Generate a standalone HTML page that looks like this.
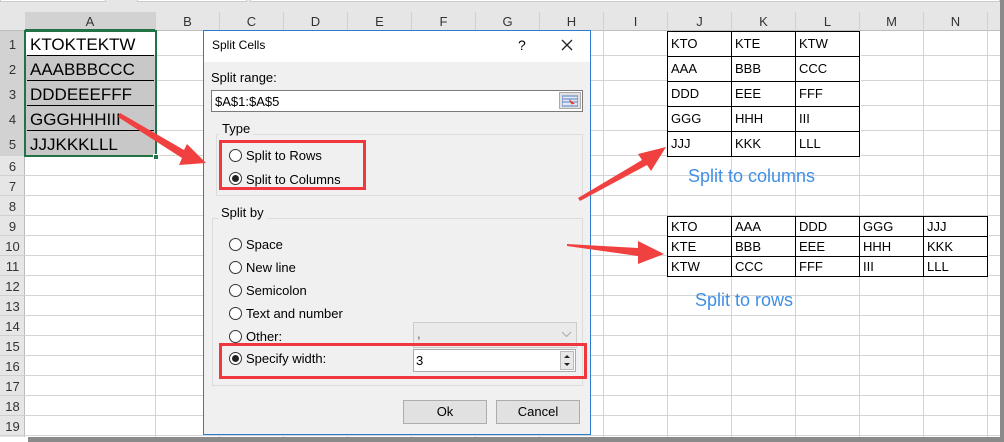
<!DOCTYPE html>
<html><head><meta charset="utf-8"><style>
body{margin:0;width:1004px;height:442px;overflow:hidden;background:#fff;position:relative;font-family:"Liberation Sans",sans-serif}
div{position:absolute;box-sizing:border-box}
.vl{width:1px;background:#d4d4d4}
.hl{height:1px;background:#d4d4d4}
.ch{top:12px;height:19px;font-size:13px;color:#333;text-align:center;line-height:20px;border-right:1px solid #d0d0d0}
.rh{left:0;width:25px;font-size:13px;color:#333;text-align:center;border-bottom:1px solid #d0d0d0}
.ca{left:27px;width:128px;height:25px;font-size:17px;line-height:27px;padding-left:3px;color:#000}
.t{font-size:13px;color:#000;padding-left:3px;border:1px solid #000;margin:-1px 0 0 -1px;line-height:24px}
.dl{font-size:13px;color:#000;white-space:nowrap}
.rd{width:13px;height:13px;border:1px solid #333;border-radius:50%;background:#fff}
.rd.on::after{content:"";position:absolute;left:2px;top:2px;width:7px;height:7px;border-radius:50%;background:#222}
.btn{height:24px;width:84px;border:1px solid #adadad;background:#e1e1e1;font-size:13px;text-align:center;line-height:22px}
</style></head><body>
<div style="left:0;top:0;width:1004px;height:12px;background:#e6e6e6"></div>
<div style="left:0;top:0;width:106px;height:2px;background:#fff;border:1px solid #ccc;border-top:0"></div>
<div style="left:137px;top:0;width:110px;height:2px;background:#fff;border:1px solid #ccc;border-top:0"></div>
<div style="left:250px;top:0;width:750px;height:2px;background:#fff;border:1px solid #ccc;border-top:0"></div>
<div style="left:0;top:12px;width:1000px;height:19px;background:#e6e6e6;border-bottom:1px solid #bdbdbd"></div>
<div style="left:0;top:31px;width:25px;height:406px;background:#e6e6e6;border-right:1px solid #bdbdbd"></div>
<div style="left:25px;top:12px;width:131px;height:19px;background:#d2d2d2;border-bottom:2px solid #217346"></div>
<div class="ch" style="left:25px;width:131px">A</div>
<div class="ch" style="left:156px;width:64px">B</div>
<div class="ch" style="left:220px;width:64px">C</div>
<div class="ch" style="left:284px;width:64px">D</div>
<div class="ch" style="left:348px;width:64px">E</div>
<div class="ch" style="left:412px;width:64px">F</div>
<div class="ch" style="left:476px;width:64px">G</div>
<div class="ch" style="left:540px;width:64px">H</div>
<div class="ch" style="left:604px;width:64px">I</div>
<div class="ch" style="left:668px;width:64px">J</div>
<div class="ch" style="left:732px;width:64px">K</div>
<div class="ch" style="left:796px;width:64px">L</div>
<div class="ch" style="left:860px;width:64px">M</div>
<div class="ch" style="left:924px;width:64px">N</div>
<div class="vl" style="left:155px;top:31px;height:406px"></div>
<div class="vl" style="left:219px;top:31px;height:406px"></div>
<div class="vl" style="left:283px;top:31px;height:406px"></div>
<div class="vl" style="left:347px;top:31px;height:406px"></div>
<div class="vl" style="left:411px;top:31px;height:406px"></div>
<div class="vl" style="left:475px;top:31px;height:406px"></div>
<div class="vl" style="left:539px;top:31px;height:406px"></div>
<div class="vl" style="left:603px;top:31px;height:406px"></div>
<div class="vl" style="left:667px;top:31px;height:406px"></div>
<div class="vl" style="left:731px;top:31px;height:406px"></div>
<div class="vl" style="left:795px;top:31px;height:406px"></div>
<div class="vl" style="left:859px;top:31px;height:406px"></div>
<div class="vl" style="left:923px;top:31px;height:406px"></div>
<div class="vl" style="left:987px;top:31px;height:406px"></div>
<div class="hl" style="left:25px;top:55px;width:975px"></div>
<div class="hl" style="left:25px;top:80px;width:975px"></div>
<div class="hl" style="left:25px;top:105px;width:975px"></div>
<div class="hl" style="left:25px;top:130px;width:975px"></div>
<div class="hl" style="left:25px;top:155px;width:975px"></div>
<div class="hl" style="left:25px;top:175px;width:975px"></div>
<div class="hl" style="left:25px;top:195px;width:975px"></div>
<div class="hl" style="left:25px;top:215px;width:975px"></div>
<div class="hl" style="left:25px;top:235px;width:975px"></div>
<div class="hl" style="left:25px;top:255px;width:975px"></div>
<div class="hl" style="left:25px;top:275px;width:975px"></div>
<div class="hl" style="left:25px;top:295px;width:975px"></div>
<div class="hl" style="left:25px;top:315px;width:975px"></div>
<div class="hl" style="left:25px;top:335px;width:975px"></div>
<div class="hl" style="left:25px;top:355px;width:975px"></div>
<div class="hl" style="left:25px;top:375px;width:975px"></div>
<div class="hl" style="left:25px;top:395px;width:975px"></div>
<div class="hl" style="left:25px;top:415px;width:975px"></div>
<div class="hl" style="left:25px;top:435px;width:975px"></div>
<div class="rh" style="top:31px;height:25px;line-height:27px;background:#d2d2d2">1</div>
<div class="rh" style="top:56px;height:25px;line-height:27px;background:#d2d2d2">2</div>
<div class="rh" style="top:81px;height:25px;line-height:27px;background:#d2d2d2">3</div>
<div class="rh" style="top:106px;height:25px;line-height:27px;background:#d2d2d2">4</div>
<div class="rh" style="top:131px;height:25px;line-height:27px;background:#d2d2d2">5</div>
<div class="rh" style="top:156px;height:20px;line-height:21px">6</div>
<div class="rh" style="top:176px;height:20px;line-height:21px">7</div>
<div class="rh" style="top:196px;height:20px;line-height:21px">8</div>
<div class="rh" style="top:216px;height:20px;line-height:21px">9</div>
<div class="rh" style="top:236px;height:20px;line-height:21px">10</div>
<div class="rh" style="top:256px;height:20px;line-height:21px">11</div>
<div class="rh" style="top:276px;height:20px;line-height:21px">12</div>
<div class="rh" style="top:296px;height:20px;line-height:21px">13</div>
<div class="rh" style="top:316px;height:20px;line-height:21px">14</div>
<div class="rh" style="top:336px;height:20px;line-height:21px">15</div>
<div class="rh" style="top:356px;height:20px;line-height:21px">16</div>
<div class="rh" style="top:376px;height:20px;line-height:21px">17</div>
<div class="rh" style="top:396px;height:20px;line-height:21px">18</div>
<div class="rh" style="top:416px;height:20px;line-height:21px">19</div>
<div style="left:25px;top:56px;width:131px;height:100px;background:#c8c8c8"></div>
<div style="left:27px;top:55px;width:127px;height:1px;background:#000"></div>
<div style="left:27px;top:80px;width:127px;height:1px;background:#000"></div>
<div style="left:27px;top:105px;width:127px;height:1px;background:#000"></div>
<div style="left:27px;top:130px;width:127px;height:1px;background:#000"></div>
<div class="ca" style="top:31px">KTOKTEKTW</div>
<div class="ca" style="top:56px">AAABBBCCC</div>
<div class="ca" style="top:81px">DDDEEEFFF</div>
<div class="ca" style="top:106px">GGGHHHIII</div>
<div class="ca" style="top:131px">JJJKKKLLL</div>
<div style="left:24px;top:30px;width:133px;height:127px;border:2px solid #217346"></div>
<div style="left:153px;top:154px;width:6px;height:6px;background:#217346;border:1px solid #fff"></div>
<div style="left:668px;top:32px;width:193px;height:125px;background:#fff">
<div class="t" style="left:0;top:0;width:65px;height:26px">KTO</div><div class="t" style="left:64px;top:0;width:65px;height:26px">KTE</div><div class="t" style="left:128px;top:0;width:65px;height:26px">KTW</div>
<div class="t" style="left:0;top:25px;width:65px;height:26px">AAA</div><div class="t" style="left:64px;top:25px;width:65px;height:26px">BBB</div><div class="t" style="left:128px;top:25px;width:65px;height:26px">CCC</div>
<div class="t" style="left:0;top:50px;width:65px;height:26px">DDD</div><div class="t" style="left:64px;top:50px;width:65px;height:26px">EEE</div><div class="t" style="left:128px;top:50px;width:65px;height:26px">FFF</div>
<div class="t" style="left:0;top:75px;width:65px;height:26px">GGG</div><div class="t" style="left:64px;top:75px;width:65px;height:26px">HHH</div><div class="t" style="left:128px;top:75px;width:65px;height:26px">III</div>
<div class="t" style="left:0;top:100px;width:65px;height:26px">JJJ</div><div class="t" style="left:64px;top:100px;width:65px;height:26px">KKK</div><div class="t" style="left:128px;top:100px;width:65px;height:26px">LLL</div>
</div>
<div style="left:668px;top:217px;width:321px;height:60px;background:#fff">
<div class="t" style="left:0;top:0;width:65px;height:21px;line-height:20px">KTO</div><div class="t" style="left:64px;top:0;width:65px;height:21px;line-height:20px">AAA</div><div class="t" style="left:128px;top:0;width:65px;height:21px;line-height:20px">DDD</div><div class="t" style="left:192px;top:0;width:65px;height:21px;line-height:20px">GGG</div><div class="t" style="left:256px;top:0;width:65px;height:21px;line-height:20px">JJJ</div>
<div class="t" style="left:0;top:20px;width:65px;height:21px;line-height:20px">KTE</div><div class="t" style="left:64px;top:20px;width:65px;height:21px;line-height:20px">BBB</div><div class="t" style="left:128px;top:20px;width:65px;height:21px;line-height:20px">EEE</div><div class="t" style="left:192px;top:20px;width:65px;height:21px;line-height:20px">HHH</div><div class="t" style="left:256px;top:20px;width:65px;height:21px;line-height:20px">KKK</div>
<div class="t" style="left:0;top:40px;width:65px;height:21px;line-height:20px">KTW</div><div class="t" style="left:64px;top:40px;width:65px;height:21px;line-height:20px">CCC</div><div class="t" style="left:128px;top:40px;width:65px;height:21px;line-height:20px">FFF</div><div class="t" style="left:192px;top:40px;width:65px;height:21px;line-height:20px">III</div><div class="t" style="left:256px;top:40px;width:65px;height:21px;line-height:20px">LLL</div>
</div>
<div style="left:688px;top:166px;font-size:18px;color:#3f8fe6;white-space:nowrap">Split to columns</div>
<div style="left:695px;top:290px;font-size:18px;color:#3f8fe6;white-space:nowrap">Split to rows</div>
<div style="left:1000px;top:0;width:4px;height:442px;background:#8a8a8a"></div>
<div style="left:28px;top:437px;width:976px;height:5px;background:#8a8a8a"></div>
<div style="left:0;top:437px;width:28px;height:5px;background:#fff"></div>
<div style="left:203px;top:30px;width:388px;height:405px;background:#f0f0f0;border:1px solid #2b7bd3">
<div style="left:0;top:0;width:386px;height:31px;background:#fff"></div>
</div>
<div class="dl" style="left:212px;top:38px;font-size:12px">Split Cells</div>
<div class="dl" style="left:518px;top:37px;font-size:14px">?</div>
<svg style="position:absolute;left:561px;top:39px" width="12" height="12"><path d="M1 1L11 11M11 1L1 11" stroke="#222" stroke-width="1.3"/></svg>
<div class="dl" style="left:211px;top:70px">Split range:</div>
<div style="left:211px;top:90px;width:372px;height:22px;background:#fff;border:1px solid #7a7a7a"></div>
<div class="dl" style="left:215px;top:94px">$A$1:$A$5</div>
<div style="left:559px;top:92px;width:22px;height:17px;background:#e1e1e1;border:1px solid #aaa"></div>
<svg style="position:absolute;left:562px;top:95px" width="16" height="12"><rect x="0" y="1" width="16" height="10" fill="#dfe8f4" stroke="#5b7fbf"/><line x1="0" y1="4" x2="16" y2="4" stroke="#5b7fbf"/><line x1="0" y1="7" x2="16" y2="7" stroke="#5b7fbf"/><path d="M7 4L13 9L10 9L11 11L8 7Z" fill="#e0402a"/></svg>
<div style="left:216px;top:134px;width:367px;height:62px;border:1px solid #dcdcdc"></div>
<div class="dl" style="left:219px;top:121px;background:#f0f0f0;padding:0 3px">Type</div>
<div style="left:212px;top:218px;width:371px;height:168px;border:1px solid #dcdcdc"></div>
<div class="dl" style="left:218px;top:205px;background:#f0f0f0;padding:0 3px">Split by</div>
<div class="rd" style="left:229px;top:149px"></div><div class="dl" style="left:246px;top:148px">Split to Rows</div>
<div class="rd on" style="left:229px;top:172px"></div><div class="dl" style="left:246px;top:172px">Split to Columns</div>
<div style="left:219px;top:140px;width:147px;height:50px;border:3px solid #f0373d"></div>
<div class="rd" style="left:229px;top:238px"></div><div class="dl" style="left:246px;top:237px">Space</div>
<div class="rd" style="left:229px;top:261px"></div><div class="dl" style="left:246px;top:260px">New line</div>
<div class="rd" style="left:229px;top:284px"></div><div class="dl" style="left:246px;top:283px">Semicolon</div>
<div class="rd" style="left:229px;top:307px"></div><div class="dl" style="left:246px;top:306px">Text and number</div>
<div class="rd" style="left:229px;top:330px"></div><div class="dl" style="left:246px;top:329px">Other:</div>
<div style="left:413px;top:322px;width:164px;height:26px;border:1px solid #ccc;background:#eaeaea"></div>
<div class="dl" style="left:417px;top:326px;color:#555">,</div>
<svg style="position:absolute;left:561px;top:331px" width="11" height="7"><path d="M1 1L5.5 5.5L10 1" stroke="#aaa" fill="none"/></svg>
<div class="rd on" style="left:229px;top:352px"></div><div class="dl" style="left:246px;top:351px">Specify width:</div>
<div style="left:413px;top:349px;width:163px;height:23px;background:#fff;border:1px solid #aaa"></div>
<div class="dl" style="left:416px;top:353px">3</div>
<div style="left:560px;top:351px;width:14px;height:19px;background:#e8e8e8;border:1px solid #bbb"></div>
<svg style="position:absolute;left:562px;top:353px" width="10" height="16"><path d="M2 5L5 2L8 5Z M2 10L5 13L8 10Z" fill="#222"/></svg>
<div style="left:219px;top:343px;width:368px;height:36px;border:3px solid #f0373d"></div>
<div class="btn" style="left:403px;top:400px">Ok</div>
<div class="btn" style="left:496px;top:400px">Cancel</div>
<svg style="position:absolute;left:0;top:0" width="1004" height="442">
<g fill="#f04040">
<path d="M120 113L184 150L187 144L206 163L179 165L182 158L118 117Z"/>
<path d="M578 198L642 160L638 154L666 147L651 171L647 165L580 201Z"/>
<path d="M567 244L638 248L638 241L664 254L638 264L638 256L567 246Z"/>
</g>
</svg>
</body></html>
